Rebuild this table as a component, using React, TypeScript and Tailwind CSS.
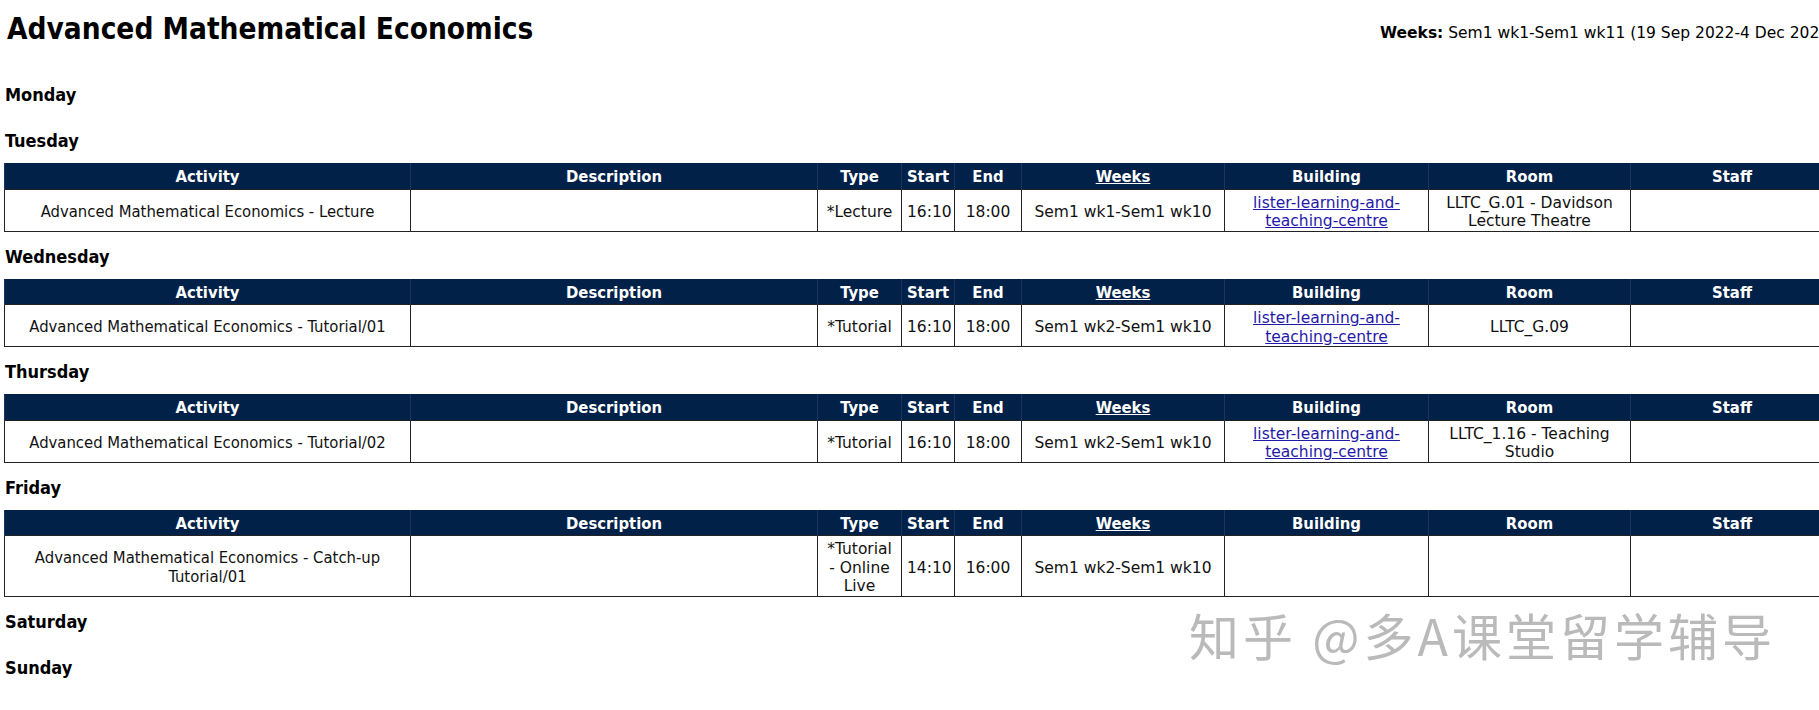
import React from "react";

interface Session {
  activity: string;
  type: string;
  start: string;
  end: string;
  weeks: string;
  building?: string;
  room?: string;
}

interface Day {
  name: string;
  sessions: Session[];
}

const days: Day[] = [
  { name: "Monday", sessions: [] },
  {
    name: "Tuesday",
    sessions: [
      {
        activity: "Advanced Mathematical Economics - Lecture",
        type: "*Lecture",
        start: "16:10",
        end: "18:00",
        weeks: "Sem1 wk1-Sem1 wk10",
        building: "lister-learning-and-teaching-centre",
        room: "LLTC_G.01 - Davidson Lecture Theatre",
      },
    ],
  },
  {
    name: "Wednesday",
    sessions: [
      {
        activity: "Advanced Mathematical Economics - Tutorial/01",
        type: "*Tutorial",
        start: "16:10",
        end: "18:00",
        weeks: "Sem1 wk2-Sem1 wk10",
        building: "lister-learning-and-teaching-centre",
        room: "LLTC_G.09",
      },
    ],
  },
  {
    name: "Thursday",
    sessions: [
      {
        activity: "Advanced Mathematical Economics - Tutorial/02",
        type: "*Tutorial",
        start: "16:10",
        end: "18:00",
        weeks: "Sem1 wk2-Sem1 wk10",
        building: "lister-learning-and-teaching-centre",
        room: "LLTC_1.16 - Teaching Studio",
      },
    ],
  },
  {
    name: "Friday",
    sessions: [
      {
        activity: "Advanced Mathematical Economics - Catch-up Tutorial/01",
        type: "*Tutorial - Online Live",
        start: "14:10",
        end: "16:00",
        weeks: "Sem1 wk2-Sem1 wk10",
      },
    ],
  },
  { name: "Saturday", sessions: [] },
  { name: "Sunday", sessions: [] },
];

// tahoma-ish bits use the condensed face
const narrow = "[font-family:'DejaVu_Sans_Condensed','DejaVu_Sans',sans-serif] [font-stretch:condensed]";

const th = "border-x border-[#1c3560] px-[4px] pt-[3px] font-bold text-white text-center";
const td = "border border-[#222] px-[5px] pt-[4px] pb-0 text-center align-middle";

const DayTable: React.FC<{ sessions: Session[] }> = ({ sessions }) => (
  <table className="table-fixed border-collapse w-[1829px] mb-[1px] text-[15.5px] leading-[18.5px] text-[#111]">
    <colgroup>
      <col className="w-[406px]" />
      <col className="w-[407px]" />
      <col className="w-[84px]" />
      <col className="w-[53px]" />
      <col className="w-[67px]" />
      <col className="w-[203px]" />
      <col className="w-[204px]" />
      <col className="w-[202px]" />
      <col className="w-[203px]" />
    </colgroup>
    <thead>
      <tr className={`h-[26px] bg-[#012149] text-[16.5px] ${narrow}`}>
        <th className={th}>Activity</th>
        <th className={th}>Description</th>
        <th className={th}>Type</th>
        <th className={th}>Start</th>
        <th className={th}>End</th>
        <th className={th}>
          <span className="underline">Weeks</span>
        </th>
        <th className={th}>Building</th>
        <th className={th}>Room</th>
        <th className={th}>Staff</th>
      </tr>
    </thead>
    <tbody>
      {sessions.map((s, i) => (
        <tr key={i} className="h-[42px]">
          <td className={`${td} text-[16.5px] ${narrow}`}>{s.activity}</td>
          <td className={td}></td>
          <td className={td}>{s.type}</td>
          <td className={td}>{s.start}</td>
          <td className={td}>{s.end}</td>
          <td className={td}>{s.weeks}</td>
          <td className={td}>
            {s.building && (
              <a href="#" className="text-[#1f1aa8] underline">
                {s.building}
              </a>
            )}
          </td>
          <td className={td}>{s.room}</td>
          <td className={td}></td>
        </tr>
      ))}
    </tbody>
  </table>
);

export default function App() {
  return (
    <div className="relative w-screen h-screen overflow-hidden bg-white text-black [font-family:'DejaVu_Sans',Verdana,sans-serif]">
      <div className="w-[1840px] px-[4px]">
        <div className="grid grid-cols-[1376px_1fr] h-[71px]">
          <h1 className={`pl-[3px] pt-[12px] text-[29.5px] leading-[34px] font-bold ${narrow}`}>
            Advanced Mathematical Economics
          </h1>
          <div className="pt-[23px] text-[15.5px] leading-[20px] whitespace-nowrap">
            <span className="font-bold">Weeks:</span> Sem1 wk1-Sem1 wk11 (19 Sep 2022-4 Dec 2022)
          </div>
        </div>

        {days.map((day) => (
          <div key={day.name}>
            <h3 className={`h-[46px] flex items-center pt-[1px] pl-[1px] text-[18px] font-bold ${narrow}`}>
              {day.name}
            </h3>
            {day.sessions.length > 0 && <DayTable sessions={day.sessions} />}
          </div>
        ))}
      </div>

      <div className="absolute left-[1189px] top-[604px] text-[50px] leading-[60px] tracking-[4px] text-[#bababa] whitespace-nowrap [font-family:'Noto_Sans_CJK_SC',sans-serif]">
        知乎 @多A课堂留学辅导
      </div>
    </div>
  );
}
